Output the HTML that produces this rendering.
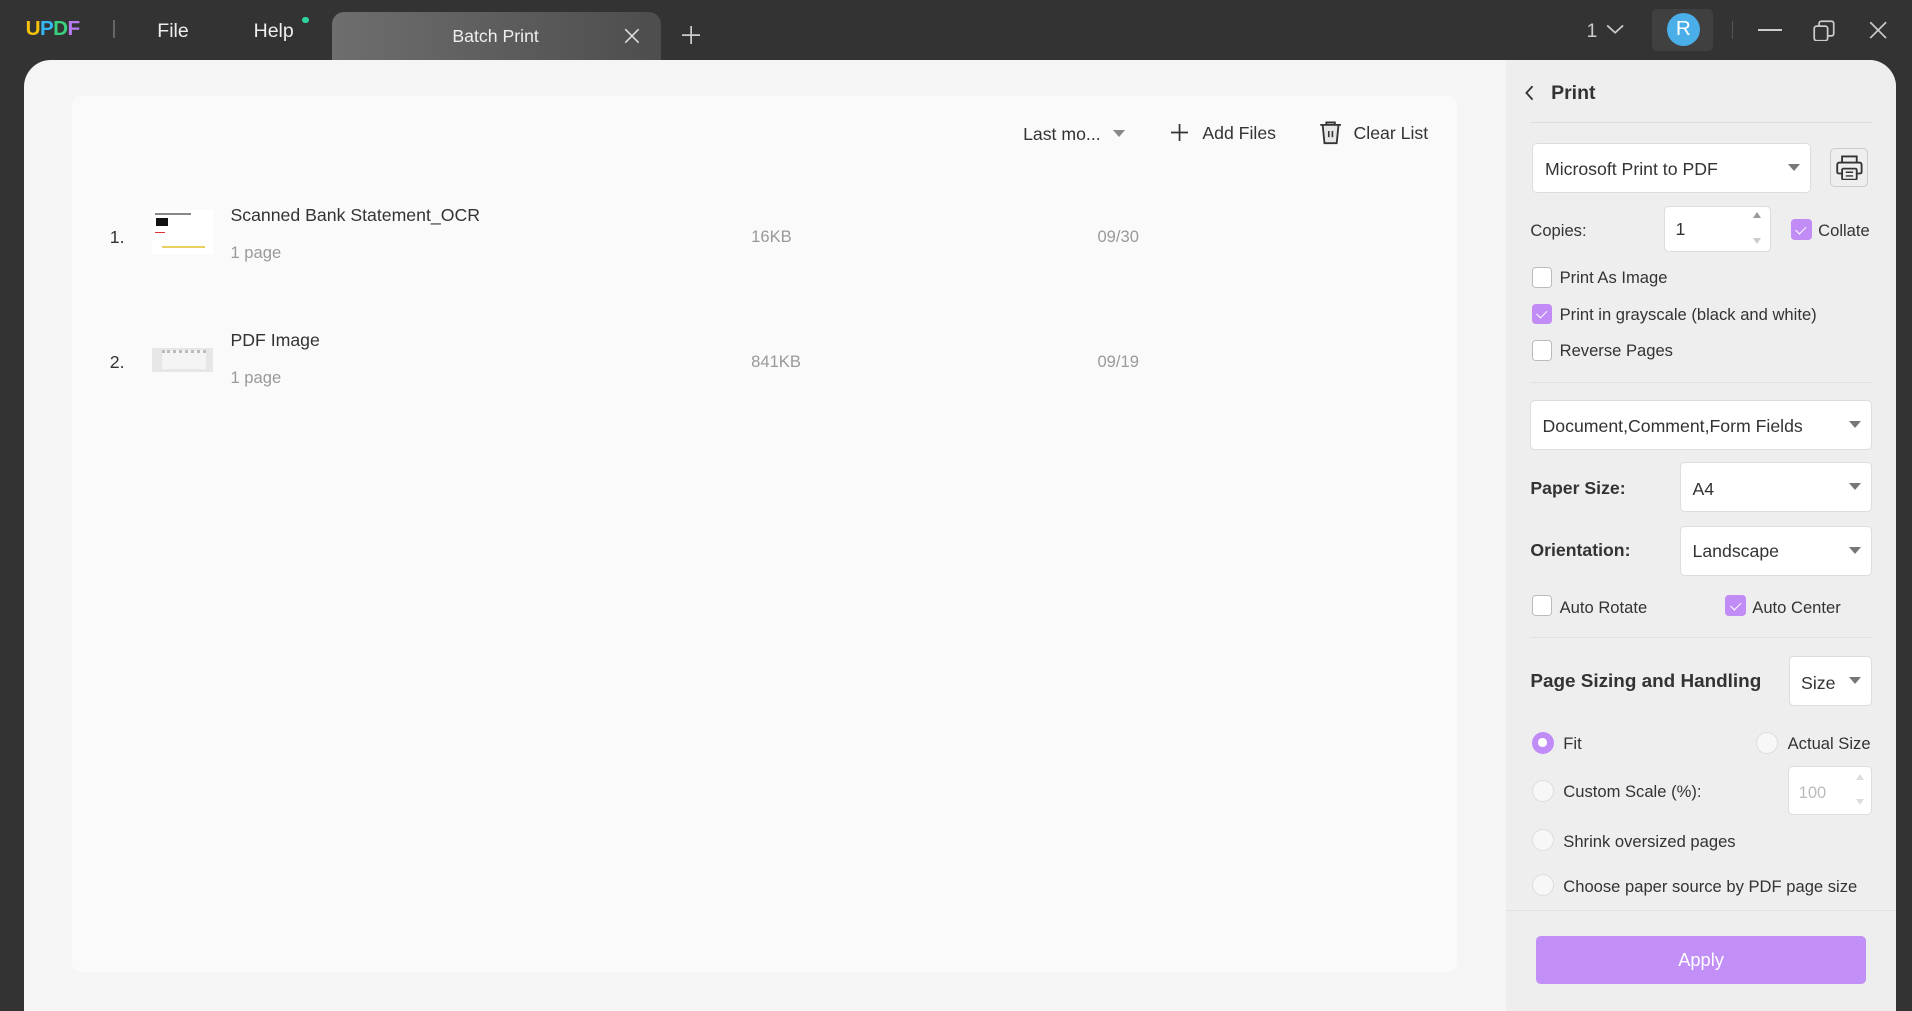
<!DOCTYPE html>
<html><head><meta charset="utf-8"><style>
*{box-sizing:border-box;margin:0;padding:0}
html,body{width:1912px;height:1001px;overflow:hidden;background:#333}
#r{position:absolute;left:0;top:0;width:1568px;height:821px;zoom:1.2194;background:#333;font-family:"Liberation Sans",sans-serif;color:#333}
.a{position:absolute}
.t{position:absolute;white-space:nowrap}
.cb{position:absolute;width:17px;height:17px;border:1px solid #bbb;border-radius:3px;background:#fff}
.cb.on{background:#c28cf6;border-color:#c28cf6}
.cb.on:after{content:"";position:absolute;left:5px;top:3px;width:4px;height:7px;border:solid #fff;border-width:0 1.5px 1.5px 0;transform:rotate(45deg)}
.rd{position:absolute;width:18px;height:18px;border:1px solid #ddd;border-radius:50%;background:#f7f7f7}
.sel{position:absolute;background:#fff;border:1px solid #ddd;border-radius:4px}
.sel:after{content:"";position:absolute;right:8px;top:50%;margin-top:-3px;border:5px solid transparent;border-top:6px solid #777;border-bottom:0}
.f15{font-size:14.5px}.f14{font-size:13.6px}
</style></head><body><div id="r">
<div class="t" style="left:21px;top:14px;font-size:17px;font-weight:bold;letter-spacing:-0.5px"><span style="color:#f4c20d">U</span><span style="color:#34b7f1">P</span><span style="color:#3ad07d">D</span><span style="color:#b77cf4">F</span></div>
<div class="a" style="left:93px;top:16px;width:1px;height:15px;background:#666"></div>
<div class="t" style="left:129px;top:16px;color:#eee;font-size:16px">File</div>
<div class="t" style="left:208px;top:16px;color:#eee;font-size:16px">Help</div>
<div class="a" style="left:248px;top:14px;width:5px;height:5px;border-radius:50%;background:#2ed3a0"></div>
<div class="a" style="left:272px;top:10px;width:270px;height:40px;border-radius:10px 10px 0 0;background:linear-gradient(90deg,#6e6e6e,#4d4d4d)"></div>
<div class="t" style="left:371px;top:21px;color:#eee;font-size:14.5px">Batch Print</div>
<svg class="a" style="left:512px;top:23px" width="13" height="13"><path d="M1 1L12 12M12 1L1 12" stroke="#ddd" stroke-width="1.3"/></svg>
<svg class="a" style="left:559px;top:21px" width="15" height="15"><path d="M7.5 0V15M0 7.5H15" stroke="#ccc" stroke-width="1.4"/></svg>
<div class="t" style="left:1301px;top:16px;color:#ccc;font-size:16px">1</div>
<svg class="a" style="left:1317px;top:19px" width="15" height="10"><path d="M1 2L7.5 8L14 2" stroke="#ccc" stroke-width="1.4" fill="none"/></svg>
<div class="a" style="left:1355px;top:7px;width:50px;height:35px;border-radius:4px;background:#404040"></div>
<div class="a" style="left:1367px;top:11px;width:27px;height:27px;border-radius:50%;background:#4aaee8;color:#fff;font-size:17px;text-align:center;line-height:27px">R</div>
<div class="a" style="left:1420px;top:17px;width:1px;height:15px;background:#555"></div>
<div class="a" style="left:1442px;top:24px;width:19px;height:1.5px;background:#ccc"></div>
<svg class="a" style="left:1487px;top:16px" width="18" height="18"><rect x="1" y="5" width="11" height="12" rx="2" fill="none" stroke="#ccc" stroke-width="1.4"/><path d="M5 5V3Q5 1 7 1H15Q17 1 17 3V11Q17 13 15 13H12" fill="none" stroke="#ccc" stroke-width="1.4"/></svg>
<svg class="a" style="left:1533px;top:17px" width="15" height="15"><path d="M1 1L14 14M14 1L1 14" stroke="#ccc" stroke-width="1.4"/></svg>
<div class="a" style="left:20px;top:49px;width:1535px;height:780px;border-radius:22px 22px 0 0;background:#f5f5f5;overflow:hidden">
 <div class="a" style="left:1215px;top:0;width:320px;height:780px;background:#eeeeee"></div>
</div>
<div class="a" style="left:59px;top:79px;width:1136px;height:718px;border-radius:8px;background:#fafafa"></div>
<div class="t f15" style="left:839px;top:102px">Last mo...</div>
<div class="a" style="left:913px;top:107px;border:5px solid transparent;border-top:6px solid #888;border-bottom:0"></div>
<svg class="a" style="left:960px;top:102px" width="14" height="14"><path d="M7 0V14M0 7H14" stroke="#333" stroke-width="1.4"/></svg>
<div class="t f15" style="left:986px;top:101px">Add Files</div>
<svg class="a" style="left:1082px;top:98px" width="19" height="21"><path d="M1 4H18M6 4V2H13V4M3 4L4.5 19H14.5L16 4" fill="#e6e6e6" stroke="#333" stroke-width="1.5"/><path d="M8 9V14M11 9V14" stroke="#333" stroke-width="1.3"/></svg>
<div class="t f15" style="left:1110px;top:101px">Clear List</div>
<div class="t f15" style="left:90px;top:186px">1.</div>
<div class="a" style="left:125px;top:172px;width:50px;height:36px;background:#fff"><div class="a" style="left:3px;top:7px;width:10px;height:6px;background:#111"></div><div class="a" style="left:2px;top:3px;width:30px;height:1px;background:#888"></div><div class="a" style="left:8px;top:30px;width:35px;height:1px;background:#e6d060"></div><div class="a" style="left:2px;top:18px;width:8px;height:1px;background:#d33"></div></div>
<div class="t f15" style="left:189px;top:168px;color:#333">Scanned Bank Statement_OCR</div>
<div class="t f14" style="left:189px;top:199px;color:#999">1 page</div>
<div class="t f14" style="left:616px;top:186px;color:#999">16KB</div>
<div class="t f14" style="left:900px;top:186px;color:#999">09/30</div>
<div class="t f15" style="left:90px;top:289px">2.</div>
<div class="a" style="left:125px;top:285px;width:50px;height:20px;background:#e6e6e6"><div class="a" style="left:8px;top:2px;width:36px;height:16px;background:#f4f4f4;border-top:3px dotted #bbb"></div></div>
<div class="t f15" style="left:189px;top:271px">PDF Image</div>
<div class="t f14" style="left:189px;top:302px;color:#999">1 page</div>
<div class="t f14" style="left:616px;top:289px;color:#999">841KB</div>
<div class="t f14" style="left:900px;top:289px;color:#999">09/19</div>
<svg class="a" style="left:1250px;top:70px" width="10" height="13"><path d="M7 1L2 6.5L7 12" stroke="#333" stroke-width="1.5" fill="none"/></svg>
<div class="t" style="left:1272px;top:67px;font-size:16px;font-weight:bold">Print</div>
<div class="a" style="left:1255px;top:100px;width:281px;height:1px;background:#ddd"></div>
<div class="sel" style="left:1256px;top:117px;width:229px;height:41px"></div>
<div class="t f15" style="left:1267px;top:130px">Microsoft Print to PDF</div>
<div class="a" style="left:1501px;top:121px;width:31px;height:32px;border:1px solid #ccc;border-radius:4px;background:#eee"></div>
<svg class="a" style="left:1506px;top:126px" width="22" height="22"><path d="M5 7V2H17V7M3 7H19Q21 7 21 9V15Q21 16 19 16H17M5 16H3Q1 16 1 15V9Q1 7 3 7" fill="none" stroke="#333" stroke-width="1.5"/><rect x="5" y="12" width="12" height="9" rx="1" fill="none" stroke="#333" stroke-width="1.5"/><path d="M8 15H14M8 18H14" stroke="#333" stroke-width="1.2"/></svg>
<div class="t f14" style="left:1255px;top:181px">Copies:</div>
<div class="a" style="left:1365px;top:169px;width:87px;height:38px;background:#fff;border:1px solid #ddd;border-radius:4px"></div>
<div class="t f15" style="left:1374px;top:180px">1</div>
<div class="a" style="left:1438px;top:174px;border:4px solid transparent;border-bottom:5px solid #999;border-top:0"></div>
<div class="a" style="left:1438px;top:195px;border:4px solid transparent;border-top:5px solid #ccc;border-bottom:0"></div>
<div class="cb on" style="left:1469px;top:180px"></div>
<div class="t f14" style="left:1491px;top:181px">Collate</div>
<div class="cb" style="left:1256px;top:219px"></div><div class="t f14" style="left:1279px;top:220px">Print As Image</div>
<div class="cb on" style="left:1256px;top:249px"></div><div class="t f14" style="left:1279px;top:250px">Print in grayscale (black and white)</div>
<div class="cb" style="left:1256px;top:279px"></div><div class="t f14" style="left:1279px;top:280px">Reverse Pages</div>
<div class="a" style="left:1255px;top:313px;width:281px;height:1px;background:#e2e2e2"></div>
<div class="sel" style="left:1255px;top:328px;width:280px;height:41px"></div>
<div class="t f15" style="left:1265px;top:341px">Document,Comment,Form Fields</div>
<div class="t f15" style="left:1255px;top:392px;font-weight:bold">Paper Size:</div>
<div class="sel" style="left:1378px;top:379px;width:157px;height:41px"></div>
<div class="t f15" style="left:1388px;top:393px">A4</div>
<div class="t f15" style="left:1255px;top:443px;font-weight:bold">Orientation:</div>
<div class="sel" style="left:1378px;top:431px;width:157px;height:41px"></div>
<div class="t f15" style="left:1388px;top:444px">Landscape</div>
<div class="cb" style="left:1256px;top:488px"></div><div class="t f14" style="left:1279px;top:490px">Auto Rotate</div>
<div class="cb on" style="left:1415px;top:488px"></div><div class="t f14" style="left:1437px;top:490px">Auto Center</div>
<div class="a" style="left:1255px;top:522px;width:281px;height:1px;background:#e2e2e2"></div>
<div class="t" style="left:1255px;top:550px;font-size:15.5px;font-weight:bold">Page Sizing and Handling</div>
<div class="sel" style="left:1467px;top:538px;width:68px;height:41px"></div>
<div class="t f15" style="left:1477px;top:552px">Size</div>
<div class="a" style="left:1256px;top:600px;width:18px;height:18px;border-radius:50%;background:#c28cf6"><div class="a" style="left:5.5px;top:5.5px;width:7px;height:7px;border-radius:50%;background:#fff"></div></div>
<div class="t f14" style="left:1282px;top:602px">Fit</div>
<div class="rd" style="left:1440px;top:600px"></div><div class="t f14" style="left:1466px;top:602px">Actual Size</div>
<div class="rd" style="left:1256px;top:640px"></div><div class="t f14" style="left:1282px;top:641px">Custom Scale (%):</div>
<div class="a" style="left:1466px;top:628px;width:69px;height:40px;background:#fff;border:1px solid #ddd;border-radius:4px"></div>
<div class="t f14" style="left:1475px;top:642px;color:#bbb">100</div>
<div class="a" style="left:1522px;top:635px;border:4px solid transparent;border-bottom:5px solid #ddd;border-top:0"></div>
<div class="a" style="left:1522px;top:655px;border:4px solid transparent;border-top:5px solid #ddd;border-bottom:0"></div>
<div class="rd" style="left:1256px;top:680px"></div><div class="t f14" style="left:1282px;top:682px">Shrink oversized pages</div>
<div class="rd" style="left:1256px;top:717px"></div><div class="t f14" style="left:1282px;top:719px">Choose paper source by PDF page size</div>
<div class="a" style="left:1235px;top:746px;width:320px;height:1px;background:#e2e2e2"></div>
<div class="a" style="left:1260px;top:768px;width:270px;height:39px;border-radius:4px;background:#c28ff7;color:#fff;font-size:15px;text-align:center;line-height:39px">Apply</div>
</div></body></html>
